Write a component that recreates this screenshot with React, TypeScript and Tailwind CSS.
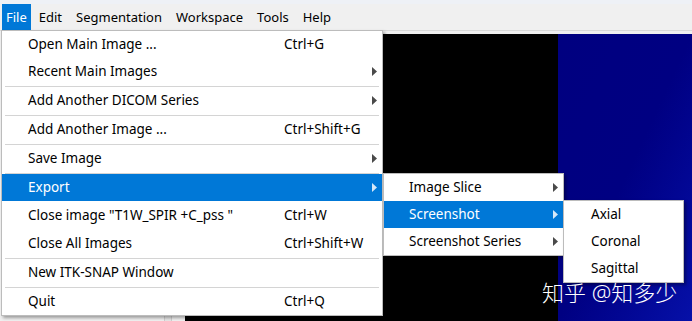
import type { ReactNode } from 'react'

type Item =
  | { kind: 'sep' }
  | { kind: 'item'; label: string; shortcut?: string; sub?: boolean; active?: boolean; tall?: boolean }

const fileMenu: Item[] = [
  { kind: 'item', label: 'Open Main Image ...', shortcut: 'Ctrl+G' },
  { kind: 'item', label: 'Recent Main Images', sub: true },
  { kind: 'sep' },
  { kind: 'item', label: 'Add Another DICOM Series', sub: true },
  { kind: 'sep' },
  { kind: 'item', label: 'Add Another Image ...', shortcut: 'Ctrl+Shift+G' },
  { kind: 'sep' },
  { kind: 'item', label: 'Save Image', sub: true },
  { kind: 'sep' },
  { kind: 'item', label: 'Export', sub: true, active: true },
  { kind: 'item', label: 'Close image "T1W_SPIR +C_pss "', shortcut: 'Ctrl+W', tall: true },
  { kind: 'item', label: 'Close All Images', shortcut: 'Ctrl+Shift+W', tall: true },
  { kind: 'sep' },
  { kind: 'item', label: 'New ITK-SNAP Window' },
  { kind: 'sep' },
  { kind: 'item', label: 'Quit', shortcut: 'Ctrl+Q' },
]

function Arrow({ active }: { active?: boolean }) {
  return (
    <svg width="5" height="9" viewBox="0 0 5 9" className="shrink-0">
      <path d="M0 0 L5 4.5 L0 9 Z" fill={active ? '#d6e8f8' : '#4a4a4a'} />
    </svg>
  )
}

function Row({
  label,
  shortcut,
  sub,
  active,
  tall,
  textLeft,
  shortcutLeft,
}: {
  label: ReactNode
  shortcut?: string
  sub?: boolean
  active?: boolean
  tall?: boolean
  textLeft: string
  shortcutLeft?: string
}) {
  return (
    <div
      className={`relative flex ${tall ? 'h-[28px]' : 'h-[27px]'} items-center ${active ? 'bg-[#0078d7] text-white' : 'text-black'}`}
    >
      <span className={`${textLeft} whitespace-nowrap`}>{label}</span>
      {shortcut && <span className={`absolute ${shortcutLeft} whitespace-nowrap`}>{shortcut}</span>}
      {sub && (
        <span className="absolute right-[5px] flex items-center">
          <Arrow active={active} />
        </span>
      )}
    </div>
  )
}

export default function App() {
  return (
    <div
      className="relative flex h-[321px] w-[692px] flex-col overflow-hidden bg-[#f0f0f0] text-[13.5px]"
      style={{ fontFamily: '"Noto Sans", "Open Sans", Arial, sans-serif' }}
    >
      {/* title bar remnant */}
      <div className="h-[4px] bg-[#eef1f6]" />

      {/* menu bar */}
      <div className="flex h-[26px] items-stretch bg-[#f0f0f0] text-[13px] text-black">
        <div className="ml-[2px] flex items-center bg-[#0078d7] px-[4px] pt-[2px] text-white">File</div>
        <div className="ml-[8px] flex items-center gap-[14px] pt-[2px]">
          <span>Edit</span>
          <span>Segmentation</span>
          <span>Workspace</span>
          <span>Tools</span>
          <span>Help</span>
        </div>
      </div>
      <div className="h-[1px] bg-[#d9d9d9]" />
      <div className="h-[3px] bg-[#f0f0f0]" />

      {/* main content */}
      <div className="flex flex-1">
        <div className="flex w-[185px] items-end justify-end bg-[#f0f0f0]">
          <div className="mr-[13px] h-[8px] w-[8px] border-x border-[#cfcfcf] bg-[#e6e6e6]" />
        </div>
        <div className="w-[373px] bg-black" />
        <div className="flex-1 bg-gradient-to-br from-[#000080] via-[#000082] to-[#0610a8]" />
      </div>

      {/* File menu */}
      <div className="absolute left-[1px] top-[30px] w-[382px] border border-[#bcbcbc] bg-white shadow-[2px_2px_3px_rgba(0,0,0,0.35)]">
        {fileMenu.map((it, i) =>
          it.kind === 'sep' ? (
            <div key={i} className="flex h-[2px] items-center px-[3px]">
              <div className="h-[1px] w-full bg-[#d4d4d4]" />
            </div>
          ) : (
            <Row
              key={i}
              label={it.label}
              shortcut={it.shortcut}
              sub={it.sub}
              active={it.active}
              tall={it.tall}
              textLeft="ml-[26px]"
              shortcutLeft="left-[282px]"
            />
          ),
        )}
      </div>

      {/* Export submenu */}
      <div className="absolute left-[383px] top-[173px] w-[181px] border border-[#bcbcbc] bg-white shadow-[2px_2px_3px_rgba(0,0,0,0.35)]">
        <Row label="Image Slice" sub textLeft="ml-[25px]" />
        <Row label="Screenshot" sub active textLeft="ml-[25px]" />
        <Row label="Screenshot Series" sub textLeft="ml-[25px]" />
      </div>

      {/* Screenshot submenu */}
      <div className="absolute left-[563px] top-[200px] w-[121px] border border-[#bcbcbc] bg-white shadow-[2px_2px_3px_rgba(0,0,0,0.35)]">
        <Row label="Axial" textLeft="ml-[27px]" />
        <Row label="Coronal" textLeft="ml-[27px]" />
        <Row label="Sagittal" textLeft="ml-[27px]" />
      </div>

      {/* watermark */}
      <div
        className="absolute left-[542px] top-[281px] whitespace-nowrap text-[22px] leading-none font-light text-white"
        style={{ fontFamily: '"Noto Sans", "Noto Sans CJK SC", sans-serif' }}
      >
        知乎 @知多少
      </div>
    </div>
  )
}
